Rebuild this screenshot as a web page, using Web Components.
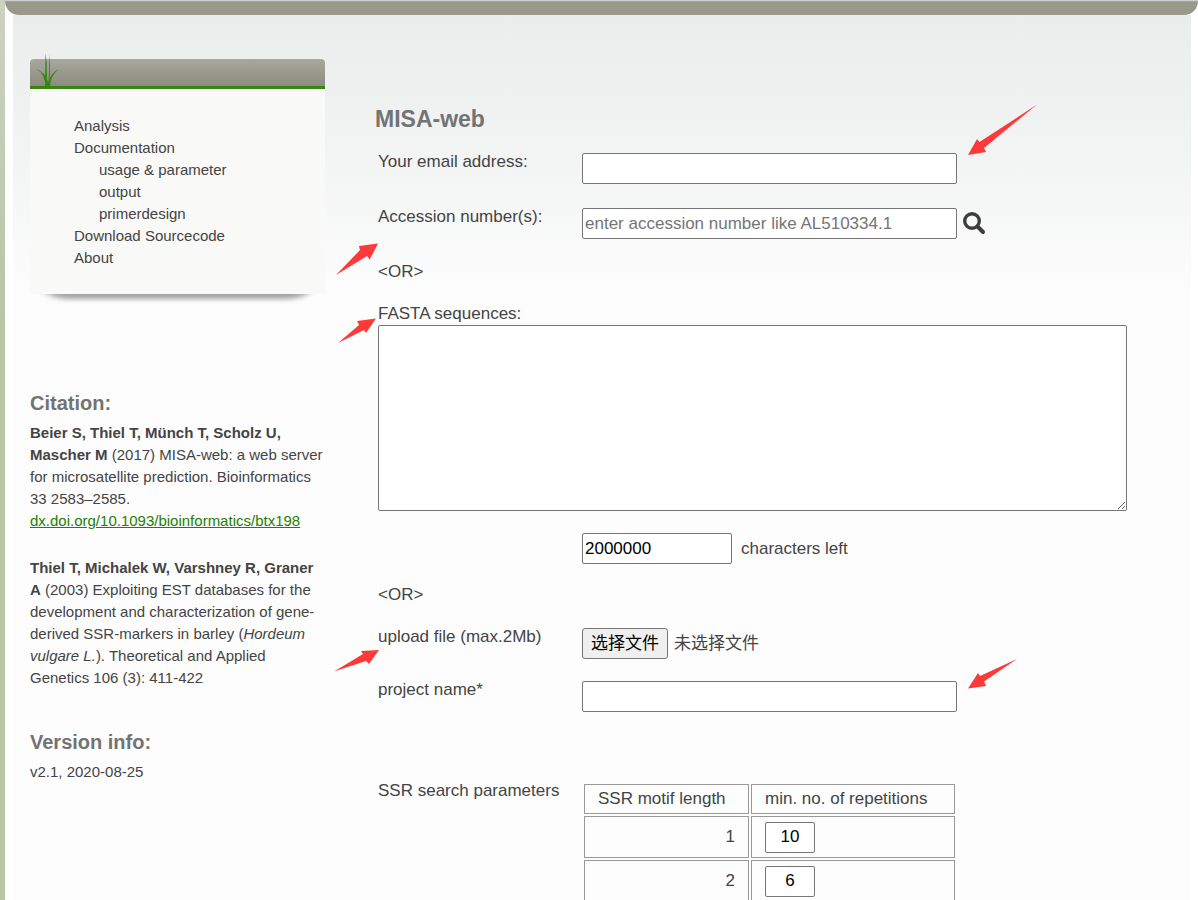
<!DOCTYPE html>
<html lang="en">
<head>
<meta charset="utf-8">
<title>MISA-web</title>
<style>
  html { min-height: 100%; background: linear-gradient(#cdd2bf, #bac4a7 320px) #bac4a7; }
  body { margin: 0; font: 17px/22px "Liberation Sans", Arial, "Noto Sans CJK SC", sans-serif; color: #444; }
</style>
</head>
<body>
<misa-page>
  <side-menu slot="side"></side-menu>
  <side-note slot="side" heading="Citation:">
    <p><b>Beier S, Thiel T, Münch T, Scholz U, Mascher M</b> (2017) MISA-web: a web server for microsatellite prediction. Bioinformatics 33 2583–2585. <a href="https://dx.doi.org/10.1093/bioinformatics/btx198" style="color:#238000">dx.doi.org/10.1093/bioinformatics/btx198</a></p>
    <p><b>Thiel T, Michalek W, Varshney R, Graner A</b> (2003) Exploiting EST databases for the development and characterization of gene-derived SSR-markers in barley (<i>Hordeum vulgare L.</i>). Theoretical and Applied Genetics 106 (3): 411-422</p>
  </side-note>
  <side-note slot="side" heading="Version info:"><p>v2.1, 2020-08-25</p></side-note>
  <misa-form></misa-form>
</misa-page>

<script>
function define(name, html, setup) {
  const template = document.createElement('template');
  template.innerHTML = html;
  customElements.define(name, class extends HTMLElement {
    connectedCallback() {
      if (this.shadowRoot) return;
      this.attachShadow({ mode: 'open' }).append(template.content.cloneNode(true));
      if (setup) setup(this, this.shadowRoot);
    }
  });
}

const fieldStyle = `
  input, textarea { box-sizing: border-box; border: 1px solid #767676; border-radius: 2px; background: #fff; color: #000; font: inherit; margin: 0; padding: 1px 2px; }
  input { height: 31px; }
  ::placeholder { color: #757575; opacity: 1; }`;

define('misa-page', `
  <style>
    :host { display: block; position: relative; margin-left: 5px; border-top: 1px solid #c9ccd0; background: #fff; overflow: hidden; }
    .bar { height: 13px; background: #99998b; border-radius: 0 0 14px 14px; border-top: 1px solid #a6a69b; }
    .sheet { margin: 0 7px 0 8px; padding: 44px 64px 0 17px; min-height: 885px; box-sizing: border-box; display: grid; grid-template-columns: 295px minmax(0, 1fr); column-gap: 50px; align-items: start;
      background: linear-gradient(#ebecec, #f3f4f4 150px, #fdfdfd 280px, #fdfdfd); }
    aside { display: flex; flex-direction: column; }
  </style>
  <div class="bar"></div>
  <div class="sheet">
    <aside><slot name="side"></slot></aside>
    <main><slot></slot></main>
  </div>
  <red-arrows></red-arrows>`);

define('side-menu', `
  <style>
    :host { display: block; position: relative; font-size: 15px; margin-bottom: 97px; }
    header { height: 27px; background: linear-gradient(#a8a89e, #8b8b7e); border-radius: 4px 4px 0 0; border-bottom: 3px solid #35850f; }
    .grass { position: absolute; left: 5px; top: -7px; }
    nav { background: #f9f9f7; padding: 26px 44px 25px; }
    ul { list-style: none; margin: 0; padding: 0; }
    ul ul { padding-left: 25px; }
    a { color: inherit; text-decoration: none; }
    .shade { display: block; width: 100%; height: 12px; position: absolute; top: 100%; }
  </style>
  <header></header>
  <svg class="grass" width="26" height="36" viewBox="0 0 26 36" fill="#2f8a0c" aria-hidden="true">
    <path d="M10 35 10.5 1l1.200 10 .3 24zM13.500 35 14.500 2 15 12l-.5 23zM10.500 35Q10 21 1 17q9 3 12 13 4-10 11-13-9 7-9 18z"/>
  </svg>
  <nav aria-label="Main">
    <ul>
      <li><a href="#analysis">Analysis</a></li>
      <li><a href="#documentation">Documentation</a>
        <ul>
          <li><a href="#usage">usage &amp; parameter</a></li>
          <li><a href="#output">output</a></li>
          <li><a href="#primerdesign">primerdesign</a></li>
        </ul>
      </li>
      <li><a href="#download">Download Sourcecode</a></li>
      <li><a href="#about">About</a></li>
    </ul>
  </nav>
  <svg class="shade" viewBox="0 0 295 12" preserveAspectRatio="none" aria-hidden="true">
    <defs><filter id="soft" x="-10%" y="-100%" width="120%" height="300%"><feGaussianBlur stdDeviation="4 2.500"/></filter></defs>
    <path d="M12 -6H283Q275 5 255 5H40Q20 5 12 -6z" fill="#000" fill-opacity=".36" filter="url(#soft)"/>
  </svg>`);

define('side-note', `
  <style>
    :host { display: block; font-size: 15px; margin-bottom: 41px; }
    h2 { margin: 0 0 7px; font-size: 20px; line-height: 24px; color: #737373; }
    ::slotted(p) { margin: 0 0 25px; }
    ::slotted(p:last-of-type) { margin-bottom: 0; }
  </style>
  <h2></h2>
  <slot></slot>`, (host, root) => {
    root.querySelector('h2').textContent = host.getAttribute('heading');
  });

define('motif-table', `
  <style>${fieldStyle}
    :host { display: block; }
    table { border-spacing: 2px; width: 375px; max-width: 100%; table-layout: fixed; }
    th, td { box-sizing: border-box; border: 1px solid #999; padding: 3px 13px; font-weight: normal; text-align: left; white-space: nowrap; }
    th:first-child { width: 165px; }
    tbody td { height: 42px; }
    td:first-child { text-align: right; }
    input { width: 50px; text-align: center; display: block; }
  </style>
  <table>
    <thead><tr><th scope="col">SSR motif length</th><th scope="col">min. no. of repetitions</th></tr></thead>
    <tbody>
      <tr><td>1</td><td><input aria-label="min. repetitions, motif length 1" value="10"></td></tr>
      <tr><td>2</td><td><input aria-label="min. repetitions, motif length 2" value="6"></td></tr>
    </tbody>
  </table>`);

define('misa-form', `
  <style>${fieldStyle}
    :host { display: block; padding-top: 48px; }
    h1 { margin: 0 0 20px; font-size: 23px; line-height: 24px; color: #737373; }
    form { display: flex; flex-direction: column; gap: 20px; padding-left: 3px; }
    section { display: flex; flex-direction: column; gap: 22px; }
    section.tight { gap: 20px; }
    .row { display: grid; grid-template-columns: 204px minmax(0, 1fr); }
    .field { display: flex; align-items: center; padding-top: 2px; grid-column: 2; }
    .wide { width: 375px; }
    .count { width: 150px; margin-right: 9px; }
    .block label { display: block; }
    textarea { display: block; width: 100%; height: 186px; resize: both; }
    .search { border: 0; background: none; padding: 0; margin-left: 6px; width: 24px; height: 24px; color: #3d3d3d; }
    .search svg { display: block; }
    .pick { box-sizing: border-box; height: 31px; border: 1px solid #767676; border-radius: 3px; background: #efefef; color: #000; font: inherit; padding: 1px 8px; margin-right: 6px; }
    .params { margin-top: 48px; }
  </style>
  <h1>MISA-web</h1>
  <form>
    <section>
      <div class="row"><label for="email">Your email address:</label><div class="field"><input class="wide" id="email" type="email"></div></div>
      <div class="row"><label for="acc">Accession number(s):</label><div class="field"><input class="wide" id="acc" placeholder="enter accession number like AL510334.1">
        <button class="search" type="button" aria-label="Search"><svg width="24" height="24" viewBox="0 0 24 24" fill="none" stroke="currentColor"><circle cx="9" cy="9" r="7.300" stroke-width="3.400"/><path d="M14.500 14.500 20 20" stroke-width="4" stroke-linecap="round"/></svg></button></div></div>
      <div>&lt;OR&gt;</div>
    </section>
    <section class="block">
      <div><label for="fasta">FASTA sequences:</label><textarea id="fasta"></textarea></div>
    </section>
    <section class="tight">
      <div class="row"><div class="field"><input class="count" id="left" value="2000000" readonly><label for="left">characters left</label></div></div>
      <div>&lt;OR&gt;</div>
      <div class="row"><label for="file">upload file (max.2Mb)</label><div class="field"><input id="file" type="file" hidden><button class="pick" type="button">选择文件</button><span>未选择文件</span></div></div>
      <div class="row"><label for="project">project name*</label><div class="field"><input class="wide" id="project"></div></div>
      <div class="row params"><span>SSR search parameters</span><div class="field"><motif-table></motif-table></div></div>
    </section>
  </form>`, (host, root) => {
    const file = root.querySelector('#file');
    root.querySelector('.pick').addEventListener('click', () => file.click());
  });

define('red-arrows', `
  <style>
    :host { position: absolute; left: 0; top: 0; pointer-events: none; }
    svg { display: block; }
  </style>
  <svg width="1193" height="899" viewBox="5 1 1193 899" fill="#fd3a39" aria-hidden="true">
    <path d="M968 155 977 139 979.500 142 1037 104.500 984 148 986 152z"/>
    <path d="M968 688.500 978 673 980 676 1017 659 984 681.500 986 686z"/>
    <path d="M378 243.500 369.700 259.500 367 256 336 275 360 250 359 246z"/>
    <path d="M376 318.500 366 333 364 330 338 343 359 325 357 321z"/>
    <path d="M379 650 369 664 366 661 334 671.500 363 654 361 651z"/>
  </svg>`);
</script>
</body>
</html>
